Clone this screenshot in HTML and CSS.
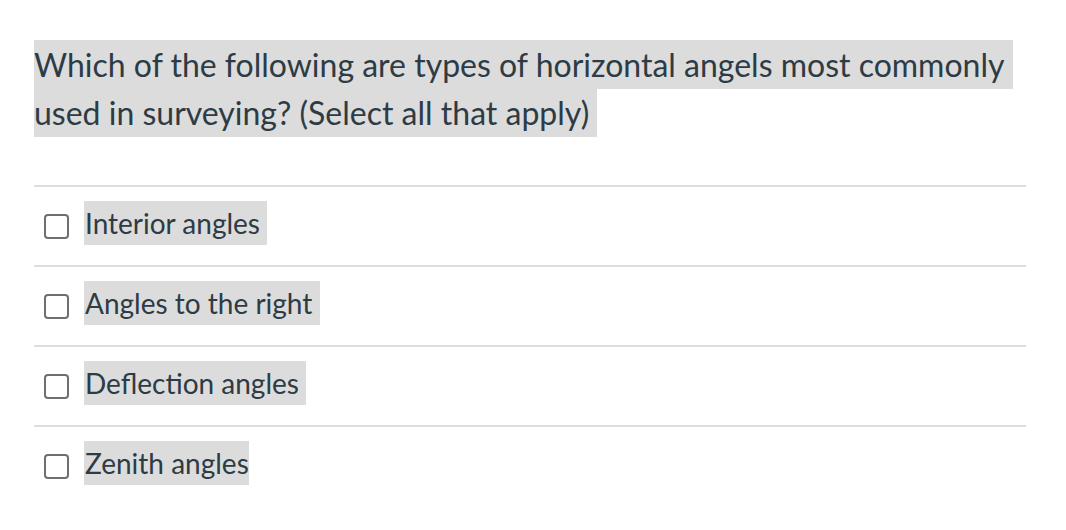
FILE: index.html
```html
<!DOCTYPE html>
<html>
<head>
<meta charset="utf-8">
<link rel="stylesheet" href="styles.css">
</head>
<body>
<div class="quiz">
  <p class="question"><span class="hl">Which of the following are types of horizontal angels most commonly used in surveying? (Select all that apply) </span></p>
  <ul class="answers">
    <li class="answer"><span class="box"></span><span class="label">Interior angles </span></li>
    <li class="answer"><span class="box"></span><span class="label">Angles to the right </span></li>
    <li class="answer"><span class="box"></span><span class="label">Deflection angles </span></li>
    <li class="answer last"><span class="box"></span><span class="label">Zenith angles</span></li>
  </ul>
</div>
</body>
</html>
```

FILE: styles.css
```css
html, body {
  margin: 0;
  padding: 0;
  background: #ffffff;
}
body {
  font-family: Lato, "Open Sans", sans-serif;
  color: #2d3b45;
}
.quiz {
  padding: 41px 40px 0 34px;
}
.question {
  margin: 0;
  font-size: 32px;
  line-height: 48px;
  width: 1000px;
}
.hl {
  background: #dcdcdc;
  white-space: pre-wrap;
  padding: 4.8px 0;
}
.answers {
  list-style: none;
  margin: 48px 0 0 0;
  padding: 0;
  width: 992px;
}
.answer {
  display: flex;
  align-items: center;
  border-top: 2px solid #dddddd;
  padding: 14px 0 20px 10px;
  gap: 15px;
}
.box {
  width: 21px;
  height: 21px;
  border: 2px solid #6f6f6f;
  border-radius: 4px;
  margin-top: 6px;
  flex: none;
}
.label {
  font-size: 28px;
  line-height: 44px;
  background: #dcdcdc;
  white-space: pre;
  padding-left: 1px;
}
```
